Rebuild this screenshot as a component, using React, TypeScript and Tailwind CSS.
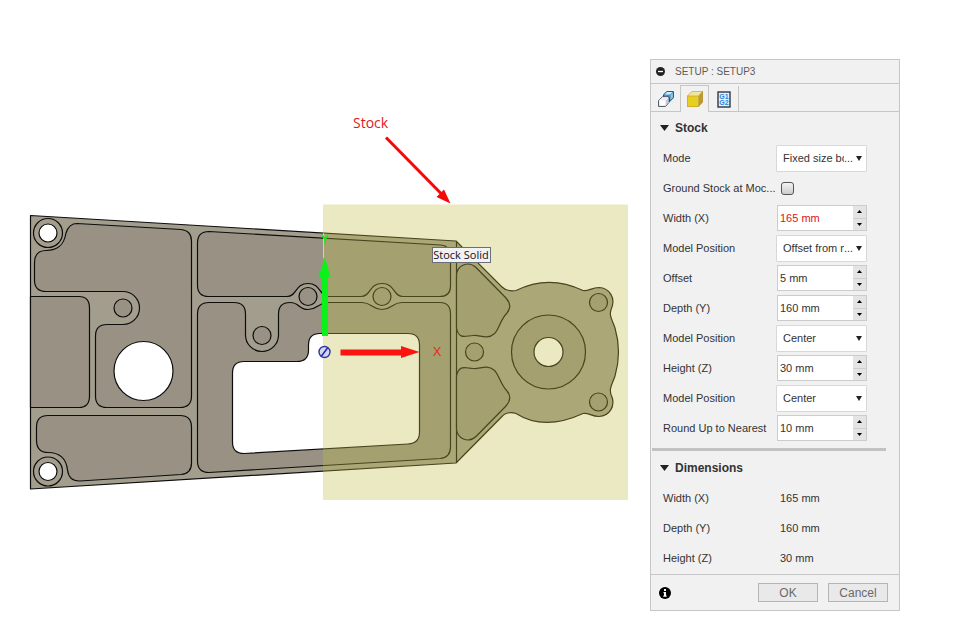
import { useState } from 'react';

type FieldRow = {
  id: string;
  label: string;
  kind: 'select' | 'number';
  value: string;
  clipped?: boolean;
  changed?: boolean;
};

const stockFields: FieldRow[] = [
  { id: 'width', label: 'Width (X)', kind: 'number', value: '165 mm', changed: true },
  { id: 'width-pos', label: 'Model Position', kind: 'select', value: 'Offset from model', clipped: true },
  { id: 'offset', label: 'Offset', kind: 'number', value: '5 mm' },
  { id: 'depth', label: 'Depth (Y)', kind: 'number', value: '160 mm' },
  { id: 'depth-pos', label: 'Model Position', kind: 'select', value: 'Center' },
  { id: 'height', label: 'Height (Z)', kind: 'number', value: '30 mm' },
  { id: 'height-pos', label: 'Model Position', kind: 'select', value: 'Center' },
  { id: 'round', label: 'Round Up to Nearest', kind: 'number', value: '10 mm' },
];

const dimensions = [
  { label: 'Width (X)', value: '165 mm' },
  { label: 'Depth (Y)', value: '160 mm' },
  { label: 'Height (Z)', value: '30 mm' },
];

const SetupIcon = () => (
  <svg viewBox="0 0 16 16" className="h-4 w-4" strokeLinejoin="round">
    <path d="M5.500 3.800 8.700.6H15.400V6.800L11.500 10.800V7H5.500Z" fill="#3f94cf" stroke="#23516f" />
    <path d="M6.500 3.600 9 1.100H14.600L12.100 3.600Z" fill="#d3ecf9" />
    <path d="M12.500 4 14.900 1.600V6.600L12.500 9Z" fill="#8cc5e9" />
    <path d="M.6 9.500 4.500 5.800H10.900V11.500L7.500 15.400H.6Z" fill="#ffffff" stroke="#4a4d55" />
    <path d="M1.100 9.300 4.700 6.300H10.300L7.500 9.300Z" fill="#e9ecf3" />
    <path d="M7.700 9.600 10.400 6.800V11.300L7.700 14.400Z" fill="#c5cad8" />
  </svg>
);

const StockIcon = () => (
  <svg viewBox="0 0 16 16" className="h-4 w-4">
    <path d="M0 5 5 0H16L11.500 5Z" fill="#efe6a0" />
    <path d="M11.500 5 16 0V11L11.500 16Z" fill="#bd9a2c" />
    <path d="M0 5H11.500V16H0Z" fill="#e8cf1d" />
    <path d="M.4 15.600V5L5 .4H15.600V11L11.500 15.600ZM.4 5H11.500V15.600M11.500 5 15.600.4" fill="none" stroke="#b8973a" strokeWidth=".6" />
  </svg>
);

const PostIcon = () => (
  <svg viewBox="0 0 14 17" className="h-[17px] w-[14px]">
    <rect x="1" y="1" width="12" height="15" fill="#e3f0fb" stroke="#34373e" strokeWidth="1.400" />
    <g fill="#2786e0" fontFamily="Liberation Sans, Arial, sans-serif" fontSize="7" fontWeight="700" textAnchor="middle">
      <text x="7" y="8">G1</text>
      <text x="7" y="14">G2</text>
    </g>
  </svg>
);

const NumberField = ({ field }: { field: FieldRow }) => (
  <div className="flex h-[26px] w-[90px] border border-[#cccccc] bg-white">
    <input
      id={field.id}
      type="text"
      defaultValue={field.value}
      className={`min-w-0 flex-1 px-0.5 outline-none ${field.changed ? 'text-[#e0101a]' : 'text-[#333333]'}`}
    />
    <div className="flex w-[13px] flex-col bg-[#e4e4e4]">
      <button type="button" aria-label={`Increase ${field.label}`} className="flex flex-1 items-center justify-center border-b border-[#cfcfcf]">
        <svg viewBox="0 0 5 3" className="h-[3px] w-[5px]"><path d="M0 3 2.500 0 5 3Z" /></svg>
      </button>
      <button type="button" aria-label={`Decrease ${field.label}`} className="flex flex-1 items-center justify-center">
        <svg viewBox="0 0 5 3" className="h-[3px] w-[5px]"><path d="M0 0H5L2.500 3Z" /></svg>
      </button>
    </div>
  </div>
);

const SelectField = ({ id, value, clipped }: { id: string; value: string; clipped?: boolean }) => (
  <div className="relative h-[27px] w-[91px] rounded-[1px] border border-[#d8d8d8] bg-white">
    <select
      id={id}
      className={`h-full appearance-none overflow-hidden bg-transparent pl-1.5 text-[#333333] outline-none ${clipped ? 'w-[67px]' : 'w-full pr-4'}`}
    >
      <option>{value}</option>
    </select>
    {clipped && <span className="pointer-events-none absolute top-1 left-[67px] leading-4">...</span>}
    <svg viewBox="0 0 6 5" className="pointer-events-none absolute top-[10px] right-1 h-[5px] w-[6px]">
      <path d="M0 0H6L3 5Z" fill="#222222" />
    </svg>
  </div>
);

const SectionTitle = ({ title, open, onToggle }: { title: string; open: boolean; onToggle: () => void }) => (
  <button type="button" aria-expanded={open} onClick={onToggle} className="flex h-[30px] w-full items-center gap-1.5 pl-[9px] text-[12px] font-bold text-[#333333]">
    <svg viewBox="0 0 9 6" className="h-[6px] w-[9px]"><path d="M0 0H9L4.500 6Z" fill="#222222" /></svg>
    {title}
  </button>
);

const SetupPanel = () => {
  const [tab, setTab] = useState('Stock');
  const [stockOpen, setStockOpen] = useState(true);
  const [dimensionsOpen, setDimensionsOpen] = useState(true);

  const tabs = [
    { name: 'Setup', icon: SetupIcon },
    { name: 'Stock', icon: StockIcon },
    { name: 'Post Process', icon: PostIcon },
  ];

  return (
    <form className="mt-[59px] w-[250px] shrink-0 border border-[#c6c6c6] bg-[#f1f1f1] text-[11px] text-[#333333]" onSubmit={e => e.preventDefault()}>
      <header className="flex h-6 items-center gap-[10px] border-b border-[#c6c6c6] pl-[5px] text-[10px] text-[#5c5c5c]">
        <svg viewBox="0 0 9 9" className="h-[9px] w-[9px]">
          <circle cx="4.500" cy="4.500" r="4.500" fill="#222222" />
          <path d="M2 4.500H7" stroke="#ffffff" strokeWidth="1.300" />
        </svg>
        <h1>SETUP : SETUP3</h1>
      </header>

      {/* Tabs */}
      <div role="tablist" className="mb-px flex h-7 border-b border-[#c6c6c6] pt-0.5">
        {tabs.map(({ name, icon: Icon }) => (
          <button
            key={name}
            type="button"
            role="tab"
            aria-label={name}
            aria-selected={tab === name}
            onClick={() => setTab(name)}
            className={`flex w-[29px] justify-center pt-[5px] ${tab === name ? '-mb-px border-x border-[#c6c6c6] bg-[#f1f1f1] shadow-[0_-1px_0_#c6c6c6]' : ''}`}
          >
            <Icon />
          </button>
        ))}
        <span className="border-r border-[#c6c6c6]" />
      </div>

      <SectionTitle title="Stock" open={stockOpen} onToggle={() => setStockOpen(!stockOpen)} />
      {stockOpen && (
        <div className="pl-3">
          <div className="flex h-[30px] items-center">
            <label htmlFor="mode" className="w-[113px]">Mode</label>
            <SelectField id="mode" value="Fixed size box" clipped />
          </div>
          <div className="flex h-[30px] items-center">
            <label htmlFor="ground" className="w-[118px]">Ground Stock at Moc...</label>
            <input id="ground" type="checkbox" className="h-[13px] w-[13px] appearance-none rounded-[3px] border border-[#555555] bg-linear-to-b from-[#f4f4f4] to-[#cccccc]" />
          </div>
          {stockFields.map(field => (
            <div key={field.id} className="flex h-[30px] items-center">
              <label htmlFor={field.id} className={field.kind === 'select' ? 'w-[113px]' : 'w-[114px]'}>{field.label}</label>
              {field.kind === 'select' ? (
                <SelectField id={field.id} value={field.value} clipped={field.clipped} />
              ) : (
                <NumberField field={field} />
              )}
            </div>
          ))}
        </div>
      )}

      <div className="mt-[5px] mr-[13px] mb-0.5 ml-px h-[3px] bg-[#c2c2c2]" />

      <SectionTitle title="Dimensions" open={dimensionsOpen} onToggle={() => setDimensionsOpen(!dimensionsOpen)} />
      {dimensionsOpen && (
        <dl className="pl-3">
          {dimensions.map(item => (
            <div key={item.label} className="flex h-[30px] items-center">
              <dt className="w-[117px]">{item.label}</dt>
              <dd>{item.value}</dd>
            </div>
          ))}
        </dl>
      )}

      <footer className="mt-px flex h-9 items-center border-t border-[#c6c6c6] pr-[11px] pl-2">
        <svg viewBox="0 0 12 12" className="h-3 w-3">
          <circle cx="6" cy="6" r="6" />
          <path d="M5 2H7V4H5ZM4.500 5H7V8.500H7.700V9.700H4.300V8.500H5V6.200H4.500Z" fill="#ffffff" />
        </svg>
        <button type="submit" className="ml-auto h-[19px] w-[60px] border border-[#b5b5b5] bg-[#e9e9e9] text-[12px] leading-4 text-[#6a6a6a]">OK</button>
        <button type="button" className="ml-[10px] h-[19px] w-[60px] border border-[#b5b5b5] bg-[#e9e9e9] text-[12px] leading-4 text-[#6a6a6a]">Cancel</button>
      </footer>
    </form>
  );
};

// Top view of the plate with the stock body on top of it
const Viewport = () => (
  <svg viewBox="0 0 650 636" className="h-auto min-w-0 flex-1" role="img" aria-label="Stock over model">
    <g stroke="#0c0c0c" strokeWidth="1.200" fill="#999284" strokeLinejoin="round">
      <path
        d="M30.500 215.500 456 241 502 287Q507 292 516 290.500C535 281 557 278 583 290.500C589 291.500 591 287.500 599 287.500C610 288 615 298 612 307C608 315 612 319 615 328Q622 352 615 376C612 385 608 389 612 397C615 406 610 416 599 416.500C591 416.500 589 412.500 583 413.500C557 425.500 535 425.500 516 413.500Q507 411 502 416.500L456 463 30.500 489Z"
        fill="#a39d8e"
      />
      <path d="M456.500 241V463" />

      {/* Pockets, left side */}
      <path d="M77 223.500 181 229.500Q191.500 230.500 191.500 241V396Q191.500 407.500 180 407.500H107Q95.500 407.500 95.500 396V336Q95.500 324.500 107 324.500H123A16.500 16.500 0 0 0 123 291.500H46Q34.500 291.500 34.500 280V263Q34.500 250.500 46 250.500C58 250.500 64 245 66 233Q69 223.500 77 223.500Z" />
      <path d="M30.500 296.500H79Q89.500 296.500 89.500 308V396Q89.500 407.500 79 407.500H30.500Z" />
      <path d="M48 415.500H180Q191.500 415.500 191.500 427V463Q191.500 473.500 181 474.500L80 481Q69 481.500 67.500 470C66 457 59 452.500 48 452.500Q36.500 452.500 36.500 440V427Q36.500 415.500 48 415.500Z" />

      {/* Pockets, middle */}
      <path d="M209 231.500 441 245Q450.500 246 450.500 256V286Q450.500 296.500 440 296.500H403C393 296.500 395 283.500 382 283.500C369 283.500 371 296.500 361 296.500H329C319 296.500 321 283.500 308 283.500C295 283.500 297 296.500 287 296.500H208.500Q197.500 296.500 197.500 285V243Q197.500 231.500 209 231.500Z" />
      <path d="M209 302.500H234Q245.500 302.500 245.500 314V335A16.500 16.500 0 0 0 278.500 335V314Q278.500 302.500 290 302.500C300 302.500 298 309.500 308 309.500C318 309.500 318 302.500 328 302.500H362C372 302.500 372 309.500 382 309.500C392 309.500 392 302.500 402 302.500H440Q450.500 302.500 450.500 314V447Q450.500 457.500 440 458.500L209 472.500Q197.500 472.500 197.500 461V314Q197.500 302.500 209 302.500Z" />
      <path d="M320 333.500H408Q419.500 333.500 419.500 345V432Q419.500 443.500 408 444L244 453.500Q232.500 453.500 232.500 442V373Q232.500 361.500 244 361.500H297Q308.500 361.500 308.500 350V345Q308.500 333.500 320 333.500Z" fill="#ffffff" />

      {/* Pockets, right side */}
      <path d="M456.500 275C457 266 468 260 476 267.500L506 298Q513 306 507 313C500 320 499 330 494 334C487 340 480 335 474 335.500C467 335 459 341 456.500 328Z" />
      <path d="M456.500 429C457 438 468 444 476 436.500L506 406Q513 398 507 391C500 384 499 374 494 370C487 364 480 369 474 368.500C467 369 459 363 456.500 376Z" />

      {/* Holes */}
      <circle cx="48" cy="233" r="14.500" fill="#a39d8e" />
      <circle cx="48" cy="233" r="9" fill="#ffffff" />
      <circle cx="48" cy="471.500" r="14.500" fill="#a39d8e" />
      <circle cx="48" cy="471.500" r="9" fill="#ffffff" />
      <circle cx="123" cy="308" r="9" />
      <circle cx="143.500" cy="371" r="29.500" fill="#ffffff" />
      <circle cx="262" cy="335.500" r="9" />
      <circle cx="308" cy="296.500" r="9" />
      <circle cx="382" cy="296.500" r="9" />
      <circle cx="474.500" cy="352" r="9" />
      <circle cx="598.500" cy="302.500" r="9" />
      <circle cx="598.500" cy="402" r="9" />
      <circle cx="548.500" cy="352" r="37" />
      <circle cx="548.500" cy="352" r="14.500" fill="#ffffff" />
    </g>

    <rect x="323" y="204.500" width="305" height="295.500" fill="#bfbd46" fillOpacity=".33" />
    <path d="M323.500 233V258" stroke="#ffffff" strokeOpacity=".5" />

    {/* Axes */}
    <path d="M322 336V277H318.500L325 257.500 330.500 277H328V336Z" fill="#0bf21a" />
    <path d="M322 235 325 239.500V244M328 235 325 239.500" fill="none" stroke="#14ee14" strokeWidth="1.600" />
    <path d="M340.500 349.500H401V346L419.500 352 401 358V355.500H340.500Z" fill="#fb1410" />
    <text x="437" y="356" fontSize="13" textAnchor="middle" fill="#e82a1c" fontFamily="Liberation Sans, Arial, sans-serif">X</text>
    <circle cx="324.500" cy="352" r="5.500" fill="#d5d8ec" stroke="#33369c" strokeWidth="1.400" />
    <path d="M321.500 356 327.500 348" stroke="#2022c8" strokeWidth="1.500" />

    {/* Annotation */}
    <text x="353" y="128" fontSize="14" fill="#e01822" fontFamily="Open Sans, Noto Sans, sans-serif">Stock</text>
    <path d="M386 137.500 443 195.500" stroke="#f40808" strokeWidth="3" />
    <path d="M450.500 203.500 436.500 197 444 189.500Z" fill="#f40808" />

    {/* Tooltip */}
    <rect x="432.500" y="247.500" width="58" height="15" fill="#f2f2f5" stroke="#6e6e78" />
    <text x="461" y="259" fontSize="11" textAnchor="middle" fill="#111111" fontFamily="Open Sans, Noto Sans, sans-serif">Stock Solid</text>
  </svg>
);

const App = () => (
  <main className="flex min-h-screen items-start bg-white pr-14 font-['Liberation_Sans',Arial,sans-serif]">
    <Viewport />
    <SetupPanel />
  </main>
);

export default App;
